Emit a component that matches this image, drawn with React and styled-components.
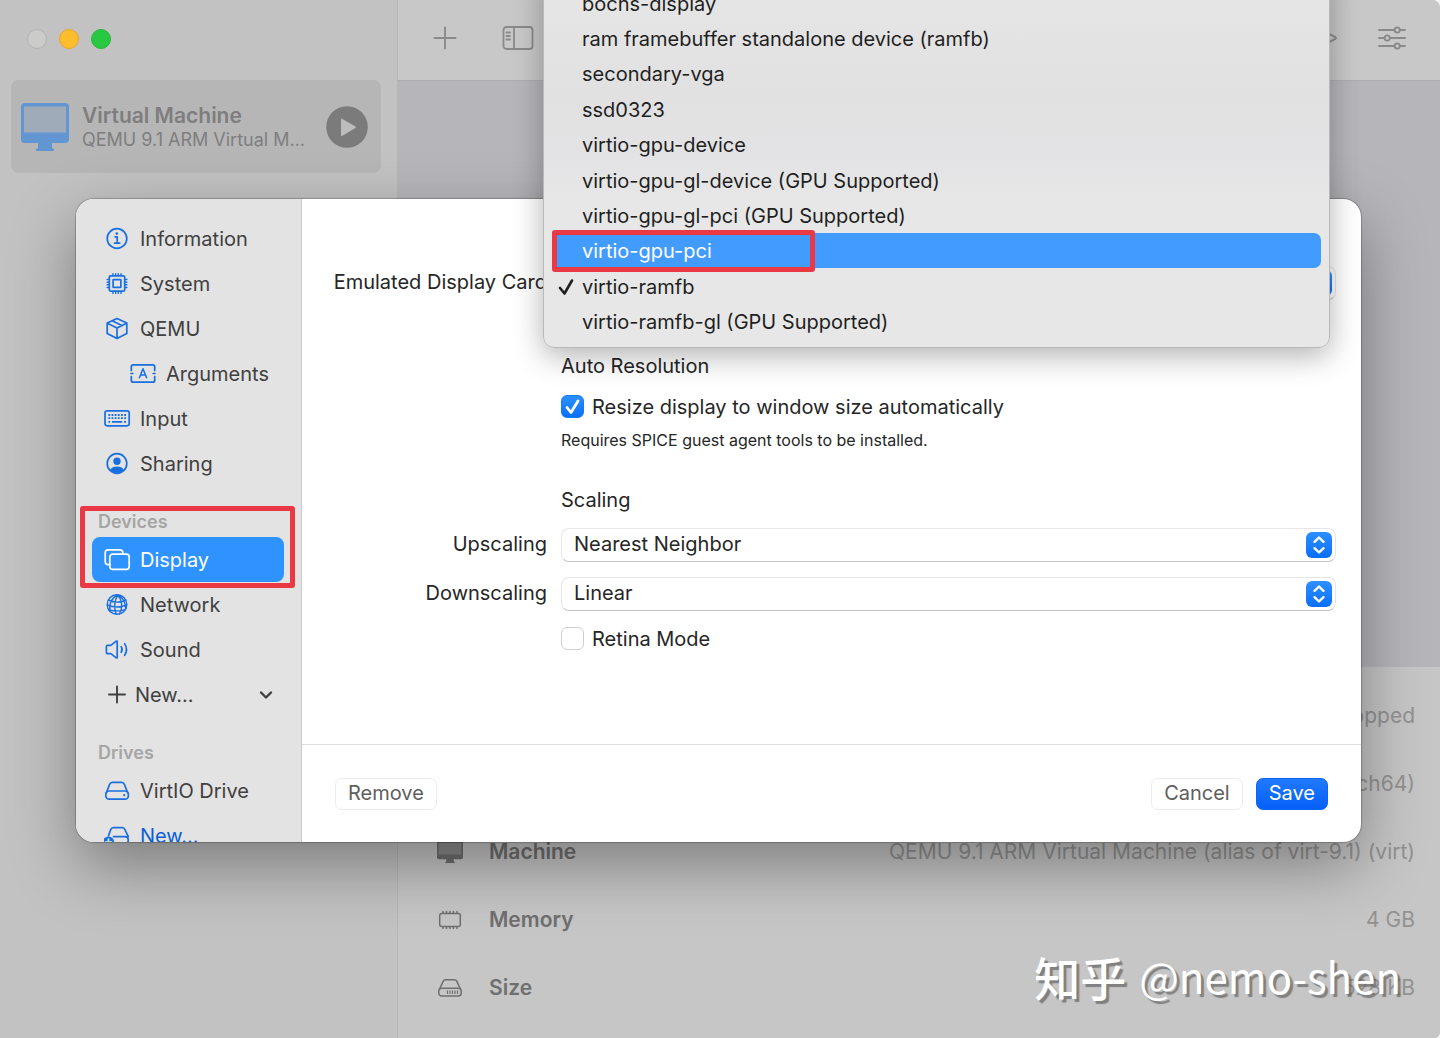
import { useState } from 'react';
import styled, { createGlobalStyle } from 'styled-components';

const GlobalStyle = createGlobalStyle`
  * {
    box-sizing: border-box;
  }

  body {
    margin: 0;
    background: #f4f4f4;
    font-family: Inter, 'Liberation Sans', sans-serif;
    font-size: 20px;
    line-height: 26px;
    color: #262626;
  }

  button, select, input {
    font: inherit;
    color: inherit;
  }
`;

const Window = styled.div`
  position: relative;
  display: flex;
  min-height: 100vh;
  overflow: hidden;
  border-radius: 0 8px 6px 0;
  background: #c6c6c6;
`;

const VmSidebar = styled.aside`
  width: 398px;
  flex-shrink: 0;
  padding: 0 16px 0 11px;
  background: #c2c2c2;
  border-right: 1px solid #b7b7b7;
`;

const TrafficLights = styled.div`
  display: flex;
  align-items: center;
  gap: 12px;
  height: 80px;
  padding: 0 0 3px 16px;
`;

const Light = styled.button`
  width: 20px;
  height: 20px;
  padding: 0;
  border-radius: 50%;
  border: 1px solid ${({ $edge }) => $edge};
  background: ${({ $color }) => $color};
`;

const VmCard = styled.div`
  display: flex;
  align-items: center;
  height: 93px;
  padding: 0 13px 0 10px;
  border-radius: 8px;
  background: #b6b6b6;
`;

const VmGlyph = styled.span`
  display: flex;
  color: #6196d3;
`;

const VmText = styled.div`
  flex: 1;
  min-width: 0;
  margin-left: 13px;
  padding-top: 2px;
  color: #7e7e7e;
  white-space: nowrap;
`;

const VmName = styled.div`
  font-size: 21px;
  font-weight: 600;
  line-height: 24px;
`;

const VmKind = styled.div`
  font-size: 18px;
  line-height: 24px;
`;

const PlainButton = styled.button`
  display: flex;
  padding: 0;
  border: 0;
  background: none;
  color: #8a8a8a;
`;

const Main = styled.main`
  flex: 1;
  min-width: 0;
  display: flex;
  flex-direction: column;
`;

const Toolbar = styled.div`
  display: flex;
  align-items: center;
  gap: 40px;
  height: 81px;
  padding: 0 33px 4px 30px;
  background: #c8c8c8;
  border-bottom: 1px solid #aeaeb1;
`;

const Spacer = styled.div`
  flex: 1;
`;

const Preview = styled.div`
  flex: 1;
  background: #b6b5ba;
`;

const Details = styled.dl`
  margin: 0;
  padding: 15px 25px 16px 39px;
  background: #c6c6c6;
  font-size: 21px;
`;

const DetailRow = styled.div`
  display: flex;
  align-items: center;
  height: 68px;
  color: #6f6f6f;

  dt {
    margin-left: 26px;
    font-weight: 600;
  }

  dd {
    margin: 0 0 0 auto;
    color: #929292;
  }
`;

const SheetLayer = styled.div`
  position: absolute;
  inset: 0;
  display: flex;
  padding: 199px 79px 196px 76px;
`;

const Sheet = styled.section`
  flex: 1;
  display: flex;
  min-width: 0;
  border-radius: 18px;
  background: #fff;
  box-shadow: 0 0 1px 1px rgba(0, 0, 0, 0.22), 0 24px 64px rgba(0, 0, 0, 0.36);
`;

const SettingsNav = styled.nav`
  width: 226px;
  flex-shrink: 0;
  padding: 17px 17px 0 16px;
  overflow: hidden;
  border-radius: 18px 0 0 18px;
  border-right: 1px solid #c9c9c9;
  background: #e3e3e3;
`;

const NavHeading = styled.h2`
  margin: 23px 0 0 6px;
  height: 28px;
  font-size: 18px;
  line-height: 26px;
  font-weight: 600;
  color: #a5a5a5;
`;

const NavItem = styled.button`
  display: flex;
  align-items: center;
  gap: ${({ $tight }) => ($tight ? '4px' : '9px')};
  width: 100%;
  height: 45px;
  padding: 0 11px 0 ${({ $nested }) => ($nested ? '38px' : '12px')};
  border: 0;
  border-radius: 8px;
  white-space: nowrap;
  background: ${({ $active }) => ($active ? '#2f93ff' : 'transparent')};
  color: ${({ $active, $link }) =>
    $active ? '#fff' : $link ? '#0a5fd6' : '#404040'};

  svg {
    flex-shrink: 0;
    color: ${({ $active, $tight }) =>
      $active ? '#fff' : $tight ? '#404040' : '#1a6fe0'};
  }

  svg:last-child {
    margin-left: auto;
  }
`;

const Marked = styled.div`
  position: relative;
`;

const MarkBox = styled.span`
  position: absolute;
  inset: ${({ $inset }) => $inset};
  width: ${({ $width }) => $width || 'auto'};
  border: 5px solid #ea3845;
  border-radius: 3px;
  pointer-events: none;
`;

const Content = styled.div`
  flex: 1;
  min-width: 0;
  display: flex;
  flex-direction: column;
`;

const Form = styled.form`
  flex: 1;
  padding: 67px 25px 0 26px;
`;

const Field = styled.div`
  display: grid;
  grid-template-columns: 219px 1fr;
  column-gap: 14px;
  align-items: center;
  margin-top: ${({ $top }) => $top || 0}px;

  > label:first-child {
    text-align: right;
    white-space: nowrap;
    padding-bottom: 2px;
  }

  > :only-child {
    grid-column: 2;
  }
`;

const GroupTitle = styled.h3`
  margin: 0;
  font-size: 20px;
  font-weight: 400;
`;

const Hint = styled.p`
  margin: 0;
  font-size: 16px;
  line-height: 20px;
`;

const PopUp = styled.div`
  position: relative;
`;

const Select = styled.select`
  display: block;
  appearance: none;
  width: 100%;
  height: 34px;
  padding: 0 40px 2px 12px;
  border: 1px solid #e6e6e6;
  border-bottom-color: #c4c4c4;
  border-radius: 8px;
  background: #fff;
`;

const Stepper = styled.span`
  position: absolute;
  top: 4px;
  right: 4px;
  display: flex;
  width: 26px;
  height: 26px;
  border-radius: 6px;
  background: linear-gradient(#2f8fff, #0a6ff8);
  pointer-events: none;
`;

const Menu = styled.div`
  position: absolute;
  z-index: 2;
  left: -18px;
  right: 6px;
  bottom: -48px;
  padding: 20px 8px 8px;
  border: 1px solid #b9b9b9;
  border-radius: 11px;
  background: linear-gradient(#e6e6e6 20px, #e1e1e1 130px, #e3e3e5 190px, #e7e7e7 240px);
  box-shadow: 0 8px 30px rgba(0, 0, 0, 0.3);
`;

const MenuList = styled.div`
  display: grid;
  grid-auto-rows: 1fr;
  height: 354px;
`;

const MenuItem = styled.button`
  position: relative;
  display: flex;
  align-items: center;
  gap: 6px;
  padding: 2px 0 0 6px;
  border: 0;
  border-radius: 7px;
  text-align: left;
  background: ${({ $active }) => ($active ? '#429bff' : 'transparent')};
  color: ${({ $active }) => ($active ? '#fff' : '#1f1f1f')};
`;

const TickSlot = styled.span`
  display: flex;
  width: 18px;
`;

const CheckLabel = styled.label`
  display: flex;
  align-items: center;
  gap: 8px;
  height: 25px;
`;

const CheckWrap = styled.span`
  position: relative;
  display: flex;

  svg {
    position: absolute;
    inset: 0;
    pointer-events: none;
  }
`;

const Checkbox = styled.input`
  appearance: none;
  width: 23px;
  height: 23px;
  margin: 0;
  border: 1px solid #cfcfcf;
  border-radius: 6px;
  background: #fff;

  &:checked {
    border-color: #157cf8;
    background: linear-gradient(#2c8fff, #0a70f7);
  }
`;

const Footer = styled.footer`
  display: flex;
  align-items: center;
  gap: 13px;
  height: 98px;
  padding: 0 33px;
  border-top: 1px solid #dedede;
`;

const Button = styled.button`
  height: 32px;
  padding: 0 12px 2px;
  border: 1px solid ${({ $primary }) => ($primary ? '#0a66f5' : '#ececec')};
  border-radius: 7px;
  background: ${({ $primary }) =>
    $primary ? 'linear-gradient(#2079ff, #0560f8)' : '#fff'};
  color: ${({ $primary }) => ($primary ? '#fff' : '#5e5e5e')};
`;

const Watermark = styled.div`
  position: absolute;
  right: 39px;
  bottom: 32px;
  display: flex;
  align-items: center;
  gap: 13px;
  font-family: 'Noto Sans CJK SC', sans-serif;
  font-size: 42px;
  line-height: 60px;
  color: #fff;
  text-shadow: 3px 3px 1px rgba(90, 90, 90, 0.65);
  pointer-events: none;

  b {
    font-size: 46px;
    font-weight: 500;
  }
`;

const Icon = ({ w = 27, h = 27, sw = 1.7, children }) => (
  <svg
    width={w}
    height={h}
    viewBox={`0 0 ${w} ${h}`}
    fill="none"
    stroke="currentColor"
    strokeWidth={sw}
    strokeLinecap="round"
    strokeLinejoin="round"
    aria-hidden="true"
  >
    {children}
  </svg>
);

const InfoIcon = () => (
  <Icon>
    <circle cx="13" cy="13.5" r="9.8" />
    <path d="M11 11.8h2.2v6.2M10.5 18.2h5.2" />
    <circle cx="12.8" cy="8.6" r="1.3" fill="currentColor" stroke="none" />
  </Icon>
);

const ChipIcon = () => (
  <Icon>
    <rect x="5.3" y="5.8" width="15.4" height="15.4" rx="1.5" />
    <rect x="9.1" y="9.6" width="7.8" height="7.8" rx="0.5" />
    <path
      d="M9 5V3.6M11.7 5V3.6M14.3 5V3.6M17 5V3.6M9 22v1.4M11.7 22v1.4M14.3 22v1.4M17 22v1.4M4.5 9.5H3.1M4.5 12.2H3.1M4.5 14.8H3.1M4.5 17.5H3.1M21.5 9.5h1.4M21.5 12.2h1.4M21.5 14.8h1.4M21.5 17.5h1.4"
      strokeWidth="1.4"
    />
  </Icon>
);

const BoxIcon = () => (
  <Icon>
    <path d="M13 3.4 22.8 8v10.4L13 23.6l-9.8-5.2V8zM3.4 8.2 13 13l9.6-4.8M13 13v10.4M8.1 5.8l9.8 4.8" />
  </Icon>
);

const ArgumentsIcon = () => (
  <Icon>
    <path d="M1.3 10.5V6.8q0-2 2-2h19.4q2 0 2 2v3.7M1.3 16.5v3.7q0 2 2 2h19.4q2 0 2-2v-3.7M1 13.5h1.8M23.2 13.5H25" />
    <path d="m9.4 17.8 3.6-9 3.6 9M10.6 15h4.8" strokeWidth="1.5" />
  </Icon>
);

const KeyboardIcon = () => (
  <Icon>
    <rect x="1" y="5.8" width="24.2" height="15" rx="2.2" />
    <path
      d="M4.4 10h17.6M4.4 13.2h17.6"
      strokeWidth="1.8"
      strokeLinecap="butt"
      strokeDasharray="1.8 1.35"
    />
    <path
      d="M4.4 16.8h1.8M8 16.8h10.2M20 16.8h2"
      strokeWidth="1.8"
      strokeLinecap="butt"
    />
  </Icon>
);

const PersonIcon = () => (
  <Icon>
    <circle cx="13" cy="13.5" r="9.8" />
    <circle cx="13" cy="11.2" r="3.7" fill="currentColor" stroke="none" />
    <path
      d="M6.1 20q2-3.4 6.9-3.4t6.9 3.4q-3 3-6.9 3t-6.9-3z"
      fill="currentColor"
      stroke="none"
    />
  </Icon>
);

const DisplayIcon = () => (
  <Icon>
    <path d="M6 18.6H4q-2.8 0-2.8-2.8V6.6q0-2.8 2.8-2.8h12q2.800 0 2.800 2.800v1.200" />
    <rect x="5.8" y="8.2" width="19.4" height="15.2" rx="2.8" />
  </Icon>
);

const GlobeIcon = () => (
  <Icon sw={1.4}>
    <circle cx="13" cy="13.5" r="9.8" />
    <path d="M13.9 3.8q-5.4 9-1.8 19.4M13.9 3.8q6.8 9.4 1.6 19.2M13.9 3.8Q4.1 8.6 6.1 20.3M13.9 3.8q7.6 4.6 7.8 13.6M4.5 9q8.400 4.200 17.400 0M3.300 13.800q9.800 4.400 19.400 0M5.100 19q8.200 1.800 15.400-.2" />
  </Icon>
);

const SoundIcon = () => (
  <Icon>
    <path d="M2.4 10.4q0-1 1-1h3.400l5.400-4.200q1-.6 1 .6v15.400q0 1.200-1 .6l-5.400-4.200H3.400q-1 0-1-1zM17.200 10.600q1.800 2.900 0 5.800M20.600 7.600q3.800 5.900 0 11.800" />
  </Icon>
);

const PlusIcon = ({ large }) =>
  large ? (
    <Icon w={34} h={34} sw={1.9}>
      <path d="M17 6.500v21M6.500 17h21" />
    </Icon>
  ) : (
    <Icon sw={1.9}>
      <path d="M13 5.500v16M5 13.500h16" />
    </Icon>
  );

const ChevronIcon = () => (
  <Icon w={14} h={14} sw={2.4}>
    <path d="m2 4.500 5 5 5-5" />
  </Icon>
);

const DriveIcon = () => (
  <Icon>
    <path d="M2.200 16 5.600 7.400q.8-2 2.800-2h9.200q2 0 2.800 2l3.400 8.600" />
    <rect x="1.800" y="14" width="22.600" height="8.200" rx="3.400" />
    <circle cx="20.200" cy="18.200" r="1.100" fill="currentColor" stroke="none" />
  </Icon>
);

const NewDriveIcon = () => (
  <Icon>
    <path d="M4.500 13.800 6.700 7.600q.8-2 2.600-2h9q2 0 2.600 2l3.400 7M9.500 14.600h11.600q3.200 0 3.200 3.400t-3.200 3.400H12" />
    <circle cx="4.500" cy="20" r="5.600" fill="currentColor" stroke="none" />
    <path d="M4.500 17v6M1.500 20h6" stroke="#e3e3e3" />
  </Icon>
);

const MonitorIcon = ({ w, h, glass }) => (
  <svg
    width={w}
    height={h}
    viewBox="0 0 48 48"
    preserveAspectRatio="none"
    fill="currentColor"
    aria-hidden="true"
  >
    <rect width="48" height="40" rx="4" />
    <path d="M17 39h14v5q0 1.500 1.500 2t0 2h-17q-1.500-1.500 0-2T17 44z" />
    <rect x="3" y="3.500" width="42" height="26" fill={glass} />
  </svg>
);

const MemoryIcon = () => (
  <Icon w={26} h={26} sw={1.5}>
    <rect x="2.700" y="6.500" width="20.600" height="13" rx="2" />
    <path d="M6 6V4.600M9.500 6V4.600M13 6V4.600M16.500 6V4.600M20 6V4.600M6 20v1.400M9.500 20v1.400M13 20v1.400M16.500 20v1.400M20 20v1.400" />
  </Icon>
);

const SizeIcon = () => (
  <Icon w={26} h={26} sw={1.5}>
    <path d="M2.600 14 6 6.600q.8-1.800 2.600-1.800h8.800q1.800 0 2.600 1.800l3.400 7.400" />
    <rect x="1.800" y="13.200" width="22.400" height="7.800" rx="3" />
    <path
      d="M10.500 15.800v2.600M13 15.800v2.600M15.500 15.800v2.600M18 15.800v2.600M20.500 15.800v2.600"
      strokeWidth="1.2"
    />
  </Icon>
);

const DISPLAY_CARDS = [
  'bochs-display',
  'ram framebuffer standalone device (ramfb)',
  'secondary-vga',
  'ssd0323',
  'virtio-gpu-device',
  'virtio-gpu-gl-device (GPU Supported)',
  'virtio-gpu-gl-pci (GPU Supported)',
  'virtio-gpu-pci',
  'virtio-ramfb',
  'virtio-ramfb-gl (GPU Supported)',
];

const GENERAL = [
  { name: 'Information', icon: <InfoIcon /> },
  { name: 'System', icon: <ChipIcon /> },
  { name: 'QEMU', icon: <BoxIcon /> },
  { name: 'Arguments', icon: <ArgumentsIcon />, nested: true },
  { name: 'Input', icon: <KeyboardIcon /> },
  { name: 'Sharing', icon: <PersonIcon /> },
];

const DETAILS = [
  { name: 'Status', value: 'Stopped', icon: <MemoryIcon /> },
  { name: 'Architecture', value: 'ARM64 (aarch64)', icon: <MemoryIcon /> },
  {
    name: 'Machine',
    value: 'QEMU 9.1 ARM Virtual Machine (alias of virt-9.1) (virt)',
    icon: <MonitorIcon w={26} h={22} glass="#8d8d8d" />,
  },
  { name: 'Memory', value: '4 GB', icon: <MemoryIcon /> },
  { name: 'Size', value: '528 KB', icon: <SizeIcon /> },
];

const PopUpSelect = ({ id, value, options, onChange, children }) => (
  <PopUp>
    <Select id={id} value={value} onChange={(e) => onChange(e.target.value)}>
      {options.map((o) => (
        <option key={o}>{o}</option>
      ))}
    </Select>
    <Stepper>
      <Icon w={26} h={26} sw={2.4}>
        <path
          d="m8.500 9.800 4.500-4.300 4.500 4.300M8.500 16.200l4.500 4.300 4.500-4.300"
          stroke="#fff"
        />
      </Icon>
    </Stepper>
    {children}
  </PopUp>
);

const CheckField = ({ checked, onChange, label }) => (
  <CheckLabel>
    <CheckWrap>
      <Checkbox
        type="checkbox"
        checked={checked}
        onChange={(e) => onChange(e.target.checked)}
      />
      {checked && (
        <Icon w={23} h={23} sw={2.8}>
          <path d="m6 12.500 4 5L17 6" stroke="#fff" />
        </Icon>
      )}
    </CheckWrap>
    {label}
  </CheckLabel>
);

const App = () => {
  const [card, setCard] = useState('virtio-ramfb');
  const [hovered, setHovered] = useState('virtio-gpu-pci');
  const [upscaling, setUpscaling] = useState('Nearest Neighbor');
  const [downscaling, setDownscaling] = useState('Linear');
  const [autoResize, setAutoResize] = useState(true);
  const [retina, setRetina] = useState(false);

  return (
    <Window>
      <GlobalStyle />
      <VmSidebar>
        <TrafficLights>
          <Light aria-label="Close" $color="#cbcbc9" $edge="#b3b3b3" />
          <Light aria-label="Minimize" $color="#ffbd2e" $edge="#e5a52c" />
          <Light aria-label="Zoom" $color="#28c941" $edge="#27b53c" />
        </TrafficLights>
        <VmCard>
          <VmGlyph>
            <MonitorIcon w={48} h={48} glass="#9fabb8" />
          </VmGlyph>
          <VmText>
            <VmName>Virtual Machine</VmName>
            <VmKind>QEMU 9.1 ARM Virtual M...</VmKind>
          </VmText>
          <PlainButton aria-label="Run">
            <svg width="42" height="42" viewBox="0 0 42 42" aria-hidden="true">
              <circle cx="21" cy="21" r="20.8" fill="#7b7b7b" />
              <path
                d="M15 13.500v15.500q0 1.400 1.400.7l13-7.700q1.200-.8 0-1.600l-13-7.500q-1.400-.8-1.400.6z"
                fill="#bcbcbc"
              />
            </svg>
          </PlainButton>
        </VmCard>
      </VmSidebar>

      <Main>
        <Toolbar>
          <PlainButton aria-label="New virtual machine">
            <PlusIcon large />
          </PlainButton>
          <PlainButton aria-label="Toggle sidebar">
            <Icon w={32} h={26} sw={1.8}>
              <rect x="1.500" y="2" width="29" height="22" rx="3" />
              <path d="M12 2v22M4.500 7.500H8M4.500 11H8M4.500 14.500H8" />
            </Icon>
          </PlainButton>
          <Spacer />
          <PlainButton aria-label="Start">
            <Icon w={24} h={26} sw={1.9}>
              <path d="M3 4v18q0 1.500 1.400.8l18-9q1.200-.8 0-1.600l-18-9Q3 2.500 3 4z" />
            </Icon>
          </PlainButton>
          <PlainButton aria-label="Settings">
            <Icon w={30} h={26} sw={1.9}>
              <path d="M2 5h15.500M23 5h5M2 13h5.500M13 13h15M2 21h15.500M23 21h5" />
              <circle cx="20.200" cy="5" r="2.600" />
              <circle cx="10.200" cy="13" r="2.600" />
              <circle cx="20.200" cy="21" r="2.600" />
            </Icon>
          </PlainButton>
        </Toolbar>
        <Preview />
        <Details>
          {DETAILS.map(({ name, value, icon }) => (
            <DetailRow key={name}>
              {icon}
              <dt>{name}</dt>
              <dd>{value}</dd>
            </DetailRow>
          ))}
        </Details>
      </Main>

      <SheetLayer>
        <Sheet>
          <SettingsNav>
            {GENERAL.map(({ name, icon, nested }) => (
              <NavItem key={name} $nested={nested}>
                {icon}
                <span>{name}</span>
              </NavItem>
            ))}
            <Marked>
              <NavHeading>Devices</NavHeading>
              <NavItem $active>
                <DisplayIcon />
                <span>Display</span>
              </NavItem>
              <MarkBox $inset="-3px -11px -6px -12px" />
            </Marked>
            <NavItem>
              <GlobeIcon />
              <span>Network</span>
            </NavItem>
            <NavItem>
              <SoundIcon />
              <span>Sound</span>
            </NavItem>
            <NavItem $tight>
              <PlusIcon />
              <span>New...</span>
              <ChevronIcon />
            </NavItem>
            <NavHeading>Drives</NavHeading>
            <NavItem>
              <DriveIcon />
              <span>VirtIO Drive</span>
            </NavItem>
            <NavItem $link>
              <NewDriveIcon />
              <span>New...</span>
            </NavItem>
          </SettingsNav>

          <Content>
            <Form>
              <Field>
                <label htmlFor="card">Emulated Display Card</label>
                <PopUpSelect
                  id="card"
                  value={card}
                  options={DISPLAY_CARDS}
                  onChange={setCard}
                >
                  <Menu>
                    <MenuList role="listbox" aria-label="Emulated Display Card">
                      {DISPLAY_CARDS.map((name) => (
                        <MenuItem
                          key={name}
                          type="button"
                          role="option"
                          aria-selected={name === card}
                          $active={name === hovered}
                          onMouseEnter={() => setHovered(name)}
                          onClick={() => setCard(name)}
                        >
                          <TickSlot>
                            {name === card && (
                              <Icon w={18} h={20} sw={2.6}>
                                <path d="m2 11 4.500 5.500L14 3.500" />
                              </Icon>
                            )}
                          </TickSlot>
                          {name}
                          {name === 'virtio-gpu-pci' && (
                            <MarkBox $inset="-3px auto -4px 0" $width="263px" />
                          )}
                        </MenuItem>
                      ))}
                    </MenuList>
                  </Menu>
                </PopUpSelect>
              </Field>
              <Field $top={53}>
                <GroupTitle>Auto Resolution</GroupTitle>
              </Field>
              <Field $top={16}>
                <CheckField
                  checked={autoResize}
                  onChange={setAutoResize}
                  label="Resize display to window size automatically"
                />
              </Field>
              <Field $top={10}>
                <Hint>Requires SPICE guest agent tools to be installed.</Hint>
              </Field>
              <Field $top={37}>
                <GroupTitle>Scaling</GroupTitle>
              </Field>
              <Field $top={15}>
                <label htmlFor="upscaling">Upscaling</label>
                <PopUpSelect
                  id="upscaling"
                  value={upscaling}
                  options={['Linear', 'Nearest Neighbor']}
                  onChange={setUpscaling}
                />
              </Field>
              <Field $top={15}>
                <label htmlFor="downscaling">Downscaling</label>
                <PopUpSelect
                  id="downscaling"
                  value={downscaling}
                  options={['Linear', 'Nearest Neighbor']}
                  onChange={setDownscaling}
                />
              </Field>
              <Field $top={16}>
                <CheckField
                  checked={retina}
                  onChange={setRetina}
                  label="Retina Mode"
                />
              </Field>
            </Form>
            <Footer>
              <Button>Remove</Button>
              <Spacer />
              <Button>Cancel</Button>
              <Button $primary>Save</Button>
            </Footer>
          </Content>
        </Sheet>
      </SheetLayer>

      <Watermark>
        <b>知乎</b>
        <span>@nemo-shen</span>
      </Watermark>
    </Window>
  );
};

export default App;
